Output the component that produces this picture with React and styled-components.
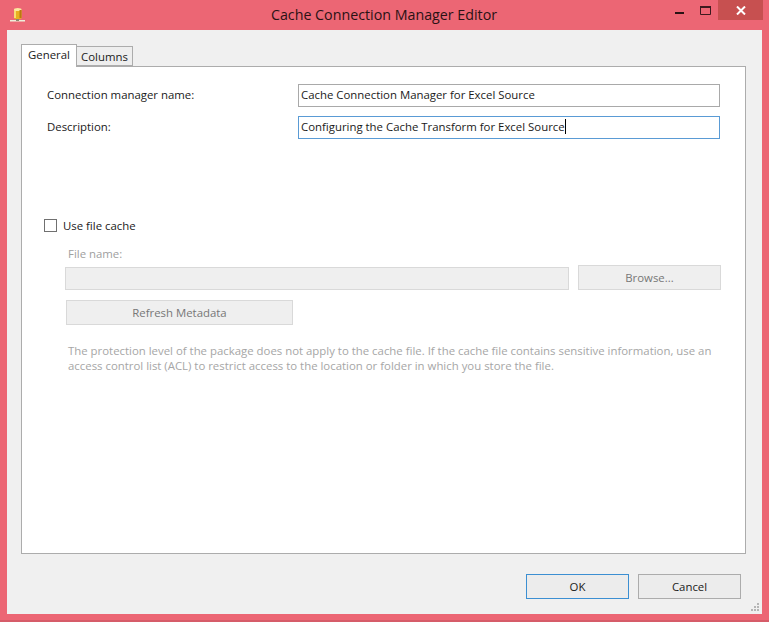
import styled, { createGlobalStyle } from 'styled-components';

const GlobalStyle = createGlobalStyle`
  html, body {
    margin: 0;
    padding: 0;
    background: #ec6674;
  }
  body {
    font-family: "Open Sans", "Noto Sans", sans-serif;
    font-size: 11.4px;
    color: #1a1a1a;
  }
`;

const Window = styled.div`
  width: 769px;
  height: 622px;
  box-sizing: border-box;
  display: flex;
  flex-direction: column;
  background: #ec6674;
  border-bottom: 2px solid #d65c69;
  padding: 0 7px 6px;
`;

const TitleBar = styled.header`
  height: 30px;
  flex: none;
  display: flex;
  position: relative;
  align-items: flex-start;
  justify-content: center;
`;

const AppIcon = styled.svg`
  position: absolute;
  left: 3px;
  top: 7px;
`;

const Title = styled.h1`
  margin: 6px 0 0 -1px;
  font-size: 14.25px;
  line-height: 18px;
  font-weight: 400;
  color: #2a1214;
`;

const Controls = styled.div`
  position: absolute;
  right: -1px;
  top: 0;
  display: flex;
  align-items: flex-start;
`;

const ControlButton = styled.div`
  width: ${(p) => p.$width}px;
  height: 20px;
  display: flex;
  align-items: ${(p) => p.$align || 'center'};
  justify-content: center;
  box-sizing: border-box;
  padding-bottom: ${(p) => p.$bottom || 0}px;
  background: ${(p) => (p.$danger ? '#c75050' : 'transparent')};
`;

const Client = styled.main`
  flex: 1;
  min-height: 0;
  display: flex;
  flex-direction: column;
  background: #f0f0f0;
  padding: 14px 16px 15px 14px;
`;

const TabStrip = styled.div`
  height: 22px;
  flex: none;
  display: flex;
  align-items: flex-end;
  position: relative;
  z-index: 1;
`;

const Tab = styled.div`
  box-sizing: border-box;
  width: ${(p) => p.$width}px;
  height: ${(p) => (p.$active ? 23 : 20)}px;
  margin-bottom: ${(p) => (p.$active ? -1 : 0)}px;
  display: flex;
  justify-content: center;
  padding-top: 2px;
  line-height: 16px;
  background: ${(p) => (p.$active ? '#ffffff' : '#eeeeee')};
  border: 1px solid #acacac;
  border-bottom: ${(p) => (p.$active ? 'none' : '1px solid #acacac')};
  border-left: ${(p) => (p.$active ? '1px solid #acacac' : 'none')};
`;

const Panel = styled.section`
  flex: 1;
  min-height: 0;
  box-sizing: border-box;
  display: flex;
  flex-direction: column;
  background: #ffffff;
  border: 1px solid #acacac;
  padding: 17px 25px 0 22px;
`;

const FieldRow = styled.div`
  display: grid;
  grid-template-columns: 254px 1fr;
  align-items: center;
  margin-bottom: 9px;
`;

const FieldLabel = styled.label`
  line-height: 16px;
  margin-left: 3px;
  margin-bottom: 2px;
`;

const TextBox = styled.div`
  box-sizing: border-box;
  height: 23px;
  display: flex;
  align-items: center;
  padding: 0 0 2px 2px;
  border: 1px solid ${(p) => (p.$focused ? '#5a9bd5' : '#a9a9a9')};
  background: #ffffff;
  white-space: nowrap;
`;

const Caret = styled.span`
  display: inline-block;
  width: 1px;
  height: 15px;
  background: #000000;
`;

const CheckRow = styled.div`
  display: flex;
  align-items: center;
  gap: 6px;
  margin-top: 69px;
  height: 16px;
`;

const CheckBox = styled.span`
  box-sizing: border-box;
  display: block;
  width: 13px;
  height: 13px;
  background: #ffffff;
  border: 1px solid #707070;
`;

const CacheOptions = styled.div`
  display: flex;
  flex-direction: column;
  padding-left: 21px;
  color: #a0a0a0;
`;

const FileLabel = styled.div`
  margin: 13px 0 3px 3px;
  line-height: 16px;
`;

const FileRow = styled.div`
  display: flex;
  align-items: flex-end;
  gap: 9px;
`;

const DisabledBox = styled.div`
  width: 504px;
  height: 23px;
  flex: none;
  box-sizing: border-box;
  background: #efefef;
  border: 1px solid #d9d9d9;
`;

const DisabledButton = styled.div`
  box-sizing: border-box;
  width: ${(p) => p.$width}px;
  height: 25px;
  flex: none;
  display: flex;
  align-items: center;
  justify-content: center;
  background: #efefef;
  border: 1px solid #d9d9d9;
  color: #777777;
  margin-top: ${(p) => p.$top || 0}px;
  margin-left: ${(p) => p.$indent || 0}px;
`;

const Note = styled.p`
  margin: 18px 0 0 3px;
  width: 660px;
  line-height: 15px;
  color: #a6a6a6;
`;

const Footer = styled.footer`
  flex: none;
  height: 45px;
  display: flex;
  justify-content: flex-end;
  align-items: flex-end;
  gap: 9px;
  position: relative;
  padding-right: 5px;
`;

const DialogButton = styled.div`
  box-sizing: border-box;
  width: 103px;
  height: 25px;
  display: flex;
  align-items: center;
  justify-content: center;
  background: #ececec;
  border: 1px solid ${(p) => (p.$primary ? '#3c8fd2' : '#acacac')};
`;

const Grip = styled.svg`
  position: absolute;
  right: -14px;
  bottom: -13px;
`;

function ConnectionIcon() {
  return (
    <AppIcon width="16" height="16" viewBox="0 0 16 16">
      <rect x="0" y="13" width="15" height="1.5" fill="#eeeeda" />
      <rect x="6" y="11" width="3" height="3" fill="#8a8a70" />
      <rect x="4" y="2" width="7.5" height="10" rx="1.5" fill="#e8b020" />
      <rect x="4" y="3" width="2" height="8" fill="#f8dc70" />
      <ellipse cx="7.75" cy="2.5" rx="3.75" ry="1.5" fill="#fbe9a0" />
      <rect x="9.5" y="3" width="2" height="8" fill="#b87a10" />
    </AppIcon>
  );
}

export default function App() {
  return (
    <Window>
      <GlobalStyle />
      <TitleBar>
        <ConnectionIcon />
        <Title>Cache Connection Manager Editor</Title>
        <Controls>
          <ControlButton $width={26} $align="flex-end" $bottom={6}>
            <svg width="9" height="2" viewBox="0 0 9 2">
              <rect width="9" height="2" fill="#2a1214" />
            </svg>
          </ControlButton>
          <ControlButton $width={26}>
            <svg width="11" height="9" viewBox="0 0 11 9">
              <path d="M.5 1.5h10v7H.5z" fill="none" stroke="#3d1a1e" />
              <rect width="11" height="2" fill="#3d1a1e" />
            </svg>
          </ControlButton>
          <ControlButton $width={45} $danger>
            <svg width="10" height="9" viewBox="0 0 10 9">
              <path d="M1 .5l8 8M9 .5l-8 8" stroke="#ffffff" strokeWidth="2" />
            </svg>
          </ControlButton>
        </Controls>
      </TitleBar>
      <Client>
        <TabStrip>
          <Tab $active $width={56}>General</Tab>
          <Tab $width={56}>Columns</Tab>
        </TabStrip>
        <Panel>
          <FieldRow>
            <FieldLabel>Connection manager name:</FieldLabel>
            <TextBox>Cache Connection Manager for Excel Source</TextBox>
          </FieldRow>
          <FieldRow>
            <FieldLabel>Description:</FieldLabel>
            <TextBox $focused>
              Configuring the Cache Transform for Excel Source
              <Caret />
            </TextBox>
          </FieldRow>
          <CheckRow>
            <CheckBox />
            Use file cache
          </CheckRow>
          <CacheOptions>
            <FileLabel>File name:</FileLabel>
            <FileRow>
              <DisabledBox />
              <DisabledButton $width={143}>Browse...</DisabledButton>
            </FileRow>
            <DisabledButton $width={227} $indent={1} $top={10}>
              Refresh Metadata
            </DisabledButton>
            <Note>
              The protection level of the package does not apply to the cache file. If the cache file contains sensitive information, use an
              access control list (ACL) to restrict access to the location or folder in which you store the file.
            </Note>
          </CacheOptions>
        </Panel>
        <Footer>
          <DialogButton $primary>OK</DialogButton>
          <DialogButton>Cancel</DialogButton>
          <Grip width="10" height="10" viewBox="0 0 10 10" fill="#b5b5b5">
            <rect x="7" y="1" width="2" height="2" />
            <rect x="4" y="4" width="2" height="2" />
            <rect x="7" y="4" width="2" height="2" />
            <rect x="1" y="7" width="2" height="2" />
            <rect x="4" y="7" width="2" height="2" />
            <rect x="7" y="7" width="2" height="2" />
          </Grip>
        </Footer>
      </Client>
    </Window>
  );
}
